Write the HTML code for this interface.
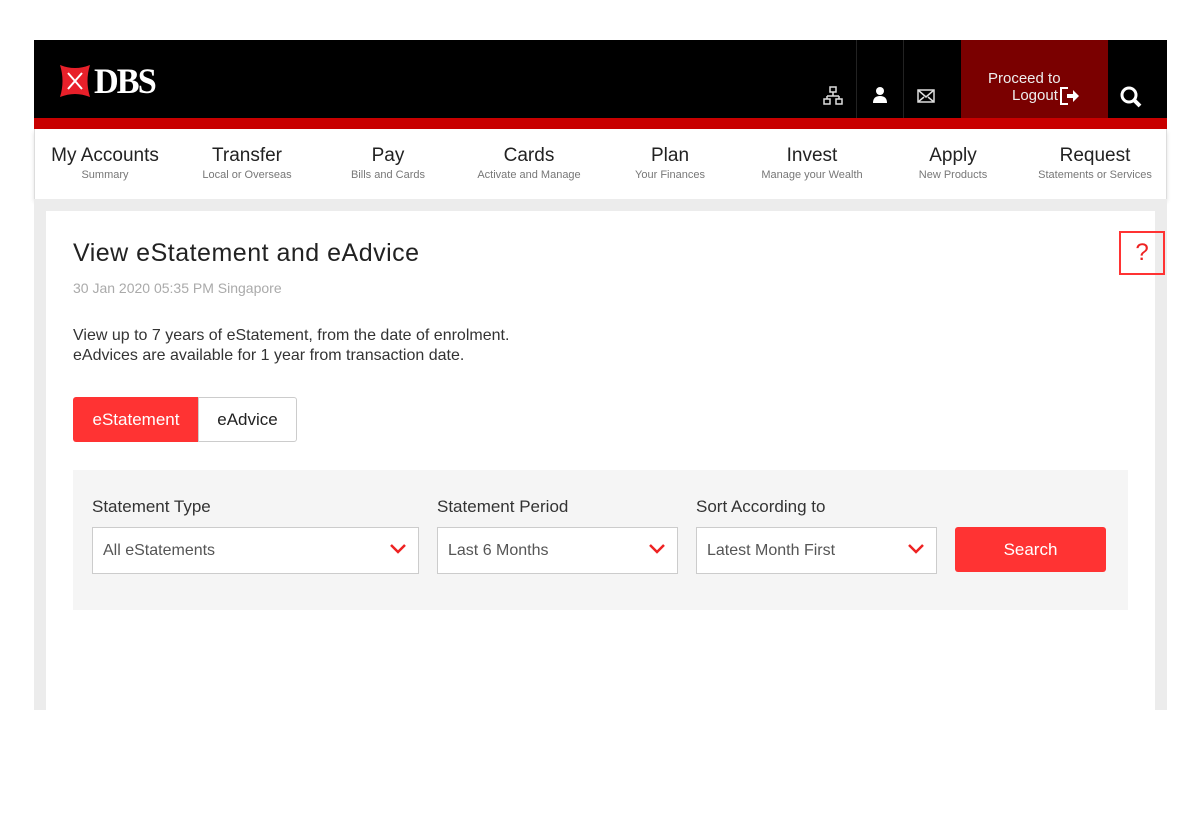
<!DOCTYPE html>
<html><head><meta charset="utf-8"><style>
*{margin:0;padding:0;box-sizing:border-box}
body{width:1200px;height:828px;background:#fff;font-family:"Liberation Sans",sans-serif;position:relative;overflow:hidden}
.a{position:absolute}
.hdr{left:34px;top:40px;width:1133px;height:79px;background:#000}
.red{left:34px;top:118px;width:1133px;height:11px;background:#c80000}
.nav{left:34px;top:129px;width:1133px;height:70px;background:#fff;border-left:1px solid #ddd;border-right:1px solid #ddd;box-shadow:0 3px 4px rgba(0,0,0,.12)}
.gray{left:34px;top:199px;width:1133px;height:511px;background:#ececec}
.panel{left:46px;top:211px;width:1109px;height:499px;background:#fff}
.ni{position:absolute;top:145px;text-align:center;transform:translateX(-50%);white-space:nowrap}
.ni b{display:block;font-weight:normal;font-size:19px;color:#222;line-height:22px}
.ni s{display:block;text-decoration:none;font-size:11px;color:#777;line-height:16px}
.lbl{font-size:17px;color:#333}
.sel{height:47px;background:#fff;border:1px solid #ccc;font-size:16px;color:#555;padding:14px 10px}
.chev{position:absolute;right:11px;top:14px}
</style></head><body>
<div class="a hdr"></div>
<div class="a red"></div>
<svg class="a" style="left:57px;top:63px" width="36" height="36" viewBox="0 0 36 36">
<path d="M3 2 Q18 8 33 2 Q28 18 33 34 Q18 28 3 34 Q8 18 3 2Z" fill="#e8202a"/>
<path d="M11 10 L25 26 M25 10 L11 26" stroke="#fff" stroke-width="2"/>
</svg>
<div class="a" style="left:94px;top:60px;font-family:'Liberation Serif',serif;font-size:36px;font-weight:bold;color:#fff;letter-spacing:-2px;transform:scaleX(0.95);transform-origin:left">DBS</div>
<div class="a" style="left:856px;top:40px;width:1px;height:78px;background:#222"></div>
<div class="a" style="left:903px;top:40px;width:1px;height:78px;background:#222"></div>
<svg class="a" style="left:823px;top:86px" width="20" height="20" viewBox="0 0 20 20" fill="none" stroke="#ddd" stroke-width="1.5"><rect x="7" y="1" width="6" height="5"/><path d="M10 6v4M4 10h12M4 10v3M16 10v3"/><rect x="1" y="13" width="6" height="5"/><rect x="13" y="13" width="6" height="5"/></svg>
<svg class="a" style="left:871px;top:86px" width="18" height="18" viewBox="0 0 18 18" fill="#fff"><circle cx="9" cy="5" r="4"/><path d="M2 17Q2 10 9 10Q16 10 16 17Z"/></svg>
<svg class="a" style="left:917px;top:89px" width="18" height="14" viewBox="0 0 18 14" fill="none" stroke="#ddd" stroke-width="1.5"><rect x="1" y="1" width="16" height="12"/><path d="M1 1l8 7 8-7M1 13l6-5M17 13l-6-5"/></svg>
<div class="a" style="left:961px;top:40px;width:147px;height:78px;background:#7a0000"></div>
<div class="a" style="left:988px;top:70px;color:#eee;font-size:15px;line-height:17px">Proceed to<br><span style="padding-left:24px">Logout</span></div>
<svg class="a" style="left:1059px;top:86px" width="22" height="20" viewBox="0 0 22 20"><path d="M9 2H2v16h7" fill="none" stroke="#fff" stroke-width="2"/><path d="M8 8h6V4l6 6-6 6v-4H8z" fill="#fff"/></svg>
<svg class="a" style="left:1119px;top:85px" width="26" height="26" viewBox="0 0 26 26" fill="none" stroke="#fff"><circle cx="10" cy="10" r="7" stroke-width="3"/><path d="M15 15l6 6" stroke-width="4"/></svg>
<div class="a nav"></div>
<div class="ni" style="left:105px"><b>My Accounts</b><s>Summary</s></div>
<div class="ni" style="left:247px"><b>Transfer</b><s>Local or Overseas</s></div>
<div class="ni" style="left:388px"><b>Pay</b><s>Bills and Cards</s></div>
<div class="ni" style="left:529px"><b>Cards</b><s>Activate and Manage</s></div>
<div class="ni" style="left:670px"><b>Plan</b><s>Your Finances</s></div>
<div class="ni" style="left:812px"><b>Invest</b><s>Manage your Wealth</s></div>
<div class="ni" style="left:953px"><b>Apply</b><s>New Products</s></div>
<div class="ni" style="left:1095px"><b>Request</b><s>Statements or Services</s></div>
<div class="a gray"></div>
<div class="a panel"></div>
<div class="a" style="left:1119px;top:231px;width:46px;height:44px;border:2px solid #f33;color:#e22;font-size:24px;text-align:center;line-height:40px">?</div>
<div class="a" style="left:73px;top:239px;font-size:25px;color:#222;letter-spacing:0.5px">View eStatement and eAdvice</div>
<div class="a" style="left:73px;top:280px;font-size:14px;color:#aaa">30 Jan 2020 05:35 PM Singapore</div>
<div class="a" style="left:73px;top:326px;font-size:16px;color:#333;line-height:20px">View up to 7 years of eStatement, from the date of enrolment.<br>eAdvices are available for 1 year from transaction date.</div>
<div class="a" style="left:73px;top:397px;width:126px;height:45px;background:#ff3333;border-radius:3px 0 0 3px;color:#fff;font-size:17px;text-align:center;line-height:45px">eStatement</div>
<div class="a" style="left:198px;top:397px;width:99px;height:45px;border:1px solid #ccc;border-radius:0 3px 3px 0;color:#222;font-size:17px;text-align:center;line-height:43px">eAdvice</div>
<div class="a" style="left:73px;top:470px;width:1055px;height:140px;background:#f5f5f5"></div>
<div class="a lbl" style="left:92px;top:497px">Statement Type</div>
<div class="a lbl" style="left:437px;top:497px">Statement Period</div>
<div class="a lbl" style="left:696px;top:497px">Sort According to</div>
<div class="a sel" style="left:92px;top:527px;width:327px">All eStatements<svg class="chev" width="18" height="14" viewBox="0 0 18 14"><path d="M2 3l7 7 7-7" fill="none" stroke="#e22" stroke-width="2.5"/></svg></div>
<div class="a sel" style="left:437px;top:527px;width:241px">Last 6 Months<svg class="chev" width="18" height="14" viewBox="0 0 18 14"><path d="M2 3l7 7 7-7" fill="none" stroke="#e22" stroke-width="2.5"/></svg></div>
<div class="a sel" style="left:696px;top:527px;width:241px">Latest Month First<svg class="chev" width="18" height="14" viewBox="0 0 18 14"><path d="M2 3l7 7 7-7" fill="none" stroke="#e22" stroke-width="2.5"/></svg></div>
<div class="a" style="left:955px;top:527px;width:151px;height:45px;background:#ff3333;border-radius:3px;color:#fff;font-size:17px;text-align:center;line-height:45px">Search</div>
</body></html>
